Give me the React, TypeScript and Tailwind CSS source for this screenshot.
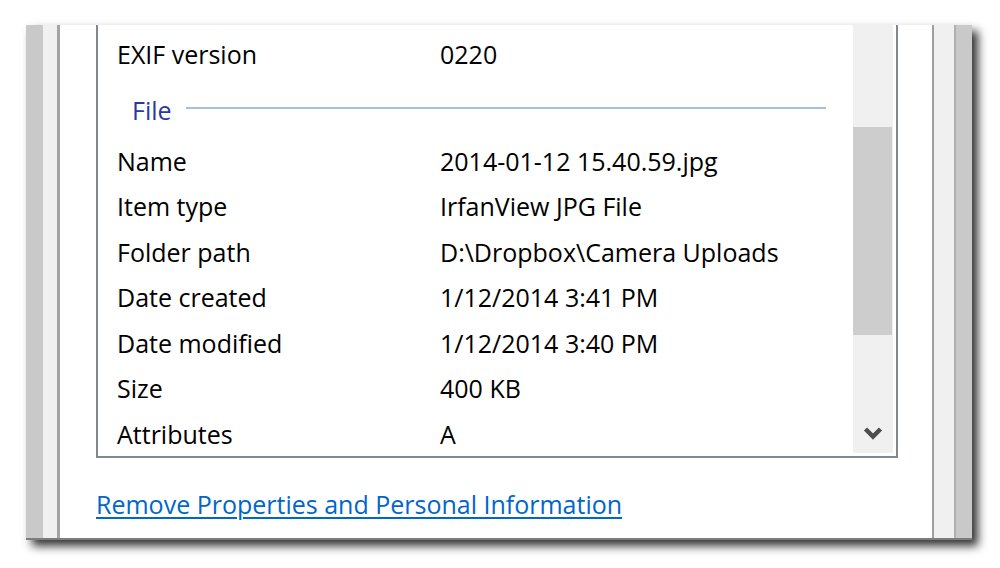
const rows = [
  { label: "Name", value: "2014-01-12 15.40.59.jpg" },
  { label: "Item type", value: "IrfanView JPG File" },
  { label: "Folder path", value: "D:\\Dropbox\\Camera Uploads" },
  { label: "Date created", value: "1/12/2014 3:41 PM" },
  { label: "Date modified", value: "1/12/2014 3:40 PM" },
  { label: "Size", value: "400 KB" },
  { label: "Attributes", value: "A" },
];

function Row({ label, value }: { label: string; value: string }) {
  return (
    <div className="flex h-[45.5px] items-center pl-[19px] whitespace-nowrap">
      <div className="w-[323px]">{label}</div>
      <div>{value}</div>
    </div>
  );
}

function ScrollBar() {
  return (
    <div className="flex h-[428px] w-[40px] flex-col bg-[#f0f0f0] mr-[3px]">
      <div className="h-[102px]" />
      <div className="h-[208px] w-[39px] bg-[#cdcdcd]" />
      <div className="flex-1" />
      <div className="flex h-[40px] items-center justify-center">
        <svg width="20" height="14" viewBox="0 0 20 14">
          <polyline points="2.5,3 10,10.5 17.5,3" fill="none" stroke="#4d4d4d" strokeWidth="4.5" />
        </svg>
      </div>
    </div>
  );
}

export default function App() {
  return (
    <div className="h-[568px] w-[1000px] bg-white pt-[25px] pl-[26px] font-['Open_Sans','Noto_Sans',sans-serif] text-[25px] text-black">
      <div className="flex h-[515px] w-[946px] border-b-2 border-[#7d7d7d] shadow-[6px_6px_9px_rgba(0,0,0,0.8)]">
        <div className="w-[17px] bg-[#c9c9c9]" />
        <div className="w-[14px] bg-[#f0f0f0]" />
        <div className="w-[3px] bg-[#a3a3a3]" />
        <div className="flex flex-1 flex-col bg-white pl-[36px] pr-[34px]">
          <div className="flex h-[433px] w-[802px] border-x-2 border-b-2 border-[#828790]">
            <div className="flex-1 pt-[7px] leading-none">
              <div className="flex h-[45.5px] items-center pl-[19px] whitespace-nowrap">
                <div className="w-[323px]">EXIF version</div>
                <div>0220</div>
              </div>
              <div className="flex h-[61px] items-center pt-[4px] pl-[34px]">
                <span className="text-[#2a3a9a]">File</span>
                <div className="ml-[14px] mr-[27px] mb-[4px] h-[2px] flex-1 bg-[#a9bce6]" />
              </div>
              {rows.map((r) => (
                <Row key={r.label} label={r.label} value={r.value} />
              ))}
            </div>
            <ScrollBar />
          </div>
          <a className="mt-[28px] leading-[36px] text-[#0066cc] underline decoration-2 underline-offset-[3px]">
            Remove Properties and Personal Information
          </a>
        </div>
        <div className="w-[2px] bg-[#a0a0a0]" />
        <div className="w-[20px] bg-[#f0f0f0]" />
        <div className="w-[2px] bg-[#b0b0b0]" />
        <div className="w-[16px] bg-[#c9c9c9]" />
      </div>
    </div>
  );
}
